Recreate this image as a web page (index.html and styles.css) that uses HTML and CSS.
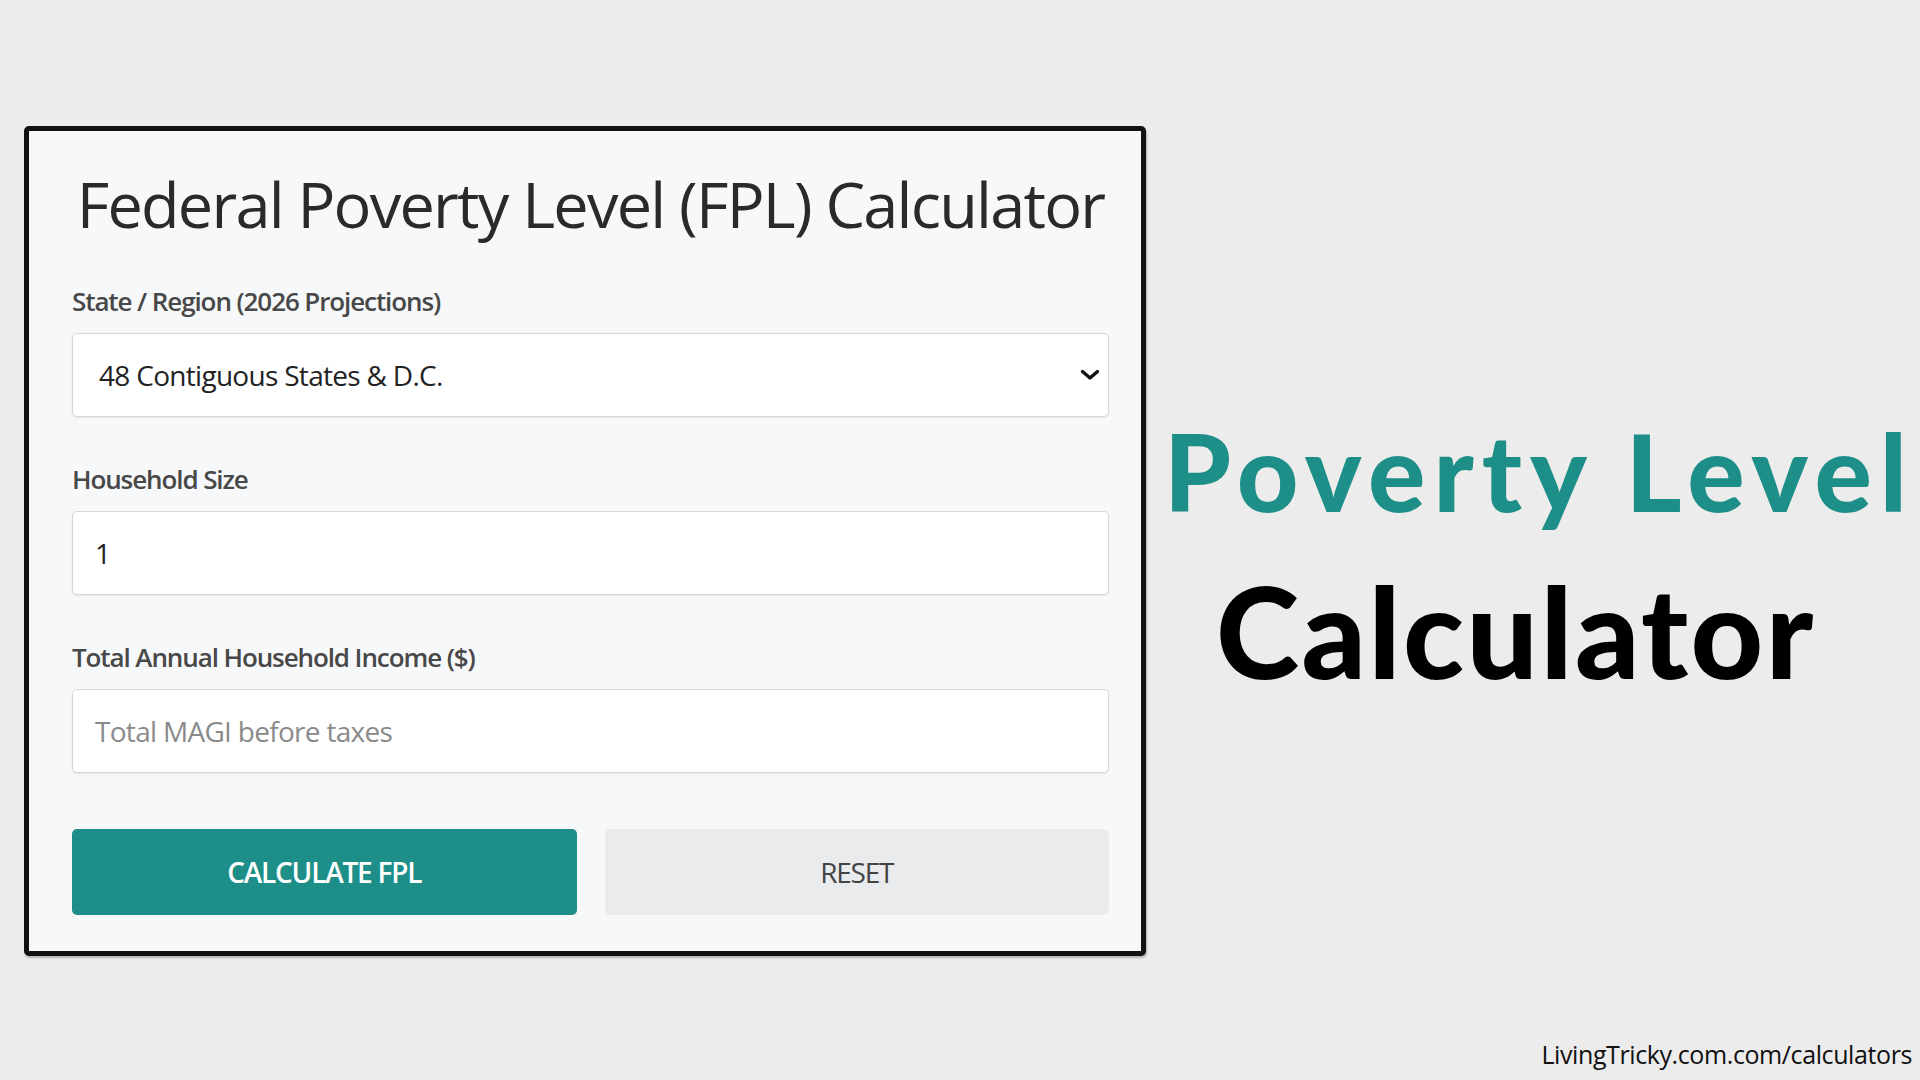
FILE: index.html
```html
<!DOCTYPE html>
<html lang="en">
<head>
<meta charset="utf-8">
<title>Poverty Level Calculator</title>
<link rel="stylesheet" href="styles.css">
</head>
<body>
<div class="page">
  <div class="main">
    <section class="card">
      <h1 class="card-title">Federal Poverty Level (FPL) Calculator</h1>
      <div class="field">
        <label class="field-label">State / Region (2026 Projections)</label>
        <div class="control select-control">
          <span class="control-text">48 Contiguous States &amp; D.C.</span>
          <svg class="chevron" width="20" height="12" viewBox="0 0 20 12" aria-hidden="true">
            <path d="M2.5 2.5 L10 9 L17.5 2.5" fill="none" stroke="#111" stroke-width="3.4" stroke-linecap="round" stroke-linejoin="round"/>
          </svg>
        </div>
      </div>
      <div class="field">
        <label class="field-label">Household Size</label>
        <div class="control input-control">
          <span class="control-text">1</span>
        </div>
      </div>
      <div class="field">
        <label class="field-label">Total Annual Household Income ($)</label>
        <div class="control input-control">
          <span class="control-text placeholder">Total MAGI before taxes</span>
        </div>
      </div>
      <div class="actions">
        <div class="btn btn-primary">CALCULATE FPL</div>
        <div class="btn btn-secondary">RESET</div>
      </div>
    </section>
    <div class="hero">
      <div class="hero-line1">Poverty Level</div>
      <div class="hero-line2">Calculator</div>
    </div>
  </div>
  <div class="footer">LivingTricky.com.com/calculators</div>
</div>
</body>
</html>
```

FILE: styles.css
```css
html, body {
  margin: 0;
  padding: 0;
}

body {
  background: #ececec;
  font-family: "Open Sans", "Noto Sans", sans-serif;
}

.page {
  width: 1920px;
  height: 1080px;
  display: flex;
  flex-direction: column;
  overflow: hidden;
  box-sizing: border-box;
  padding-bottom: 11px;
}

.main {
  display: flex;
  align-items: flex-start;
  padding-top: 126px;
  padding-left: 24px;
}

.card {
  width: 1122px;
  box-sizing: border-box;
  background: #f7f8fa;
  border: 5px solid #111;
  border-radius: 5px;
  padding: 41px 32px 36px 43px;
  box-shadow: 1px 2px 2px rgba(0,0,0,0.25);
  display: flex;
  flex-direction: column;
}

.card-title {
  margin: 0 0 51px 0;
  font-size: 63px;
  line-height: 63px;
  font-weight: 500;
  color: #2a2a2a;
  text-align: center;
  letter-spacing: -1.75px;
  white-space: nowrap;
}

.field {
  display: flex;
  flex-direction: column;
  margin-bottom: 47px;
}

.field-label {
  font-size: 26px;
  line-height: 30px;
  font-weight: 600;
  color: #484848;
  letter-spacing: -1.1px;
  margin-bottom: 17px;
}

.control {
  height: 84px;
  box-sizing: border-box;
  background: #fff;
  border: 1.5px solid #d6d9dc;
  border-radius: 5px;
  box-shadow: 0 1px 2px rgba(0,0,0,0.08);
  display: flex;
  align-items: center;
  justify-content: space-between;
}

.select-control {
  padding: 0 8px 0 26px;
}

.input-control {
  padding: 0 22px;
}

.control-text {
  font-size: 28px;
  color: #222;
  letter-spacing: -0.7px;
}

.placeholder {
  color: #8a8a8a;
}

.chevron {
  display: block;
}

.actions {
  display: grid;
  grid-template-columns: 1fr 1fr;
  gap: 28px;
  margin-top: 9px;
}

.btn {
  height: 86px;
  border-radius: 5px;
  display: flex;
  align-items: center;
  justify-content: center;
  font-size: 28px;
  letter-spacing: -1.2px;
}

.btn-primary {
  background: #1e8f88;
  color: #fff;
  font-weight: 600;
}

.btn-secondary {
  background: #e9ebed;
  color: #444;
  font-weight: 400;
}

.hero {
  display: flex;
  flex-direction: column;
  font-family: "Lato", "Open Sans", sans-serif;
  font-weight: 900;
  margin-top: 291px;
}

.hero-line1 {
  font-size: 107px;
  line-height: 107px;
  color: #1e8f88;
  padding-left: 18px;
  white-space: nowrap;
  letter-spacing: 8px;
}

.hero-line2 {
  font-size: 126px;
  line-height: 126px;
  color: #000;
  margin-top: 44px;
  padding-left: 70px;
  white-space: nowrap;
  letter-spacing: 2.5px;
}

.footer {
  margin-top: auto;
  text-align: right;
  padding-right: 8px;
  font-size: 25px;
  line-height: 30px;
  color: #111;
  letter-spacing: -0.4px;
}
```
